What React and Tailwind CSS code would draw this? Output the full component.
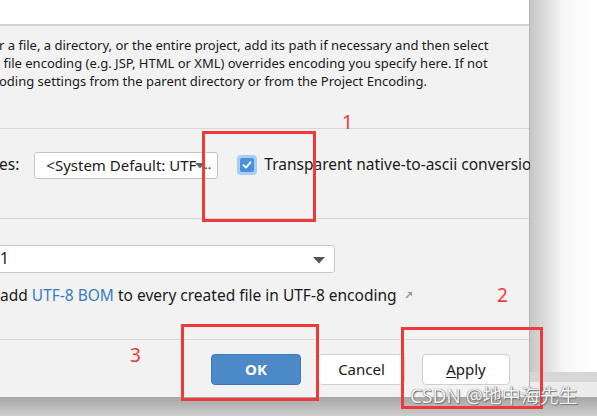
import React from 'react';

const font = { fontFamily: '"Noto Sans", "Open Sans", "Noto Sans CJK SC", sans-serif' };

const RedBox = ({ className }) => (
    <div className={`pointer-events-none absolute border-[3px] border-[#f03a3a] ${className}`} />
);

const App = () => {
    return (
        <div className="relative flex h-[416px] w-[597px] flex-col overflow-hidden bg-white text-[13px] text-[#1a1a1a]" style={font}>
            <div className="flex h-[397px]">
                {/* dialog */}
                <div className="flex w-[530px] flex-col border-r border-[#b4b4b4] bg-[#f2f2f2]">
                    <div className="h-[26px] border-b-2 border-[#d3d3d3] bg-white" />

                    {/* description */}
                    <div className="h-[102px] whitespace-nowrap pt-[10px] leading-[18px]">
                        <p className="-ml-[1px]">r a file, a directory, or the entire project, add its path if necessary and then select</p>
                        <p>&nbsp;file encoding (e.g. JSP, HTML or XML) overrides encoding you specify here. If not</p>
                        <p className="-ml-[1px]">oding settings from the parent directory or from the Project Encoding.</p>
                    </div>

                    {/* properties row */}
                    <div className="flex h-[90px] items-center gap-[15px] whitespace-nowrap border-t border-[#d6d6d6] pb-[17px] text-[15.5px]">
                        <span className="-ml-[1px]">es:</span>
                        <div className="relative flex h-[27px] w-[184px] shrink-0 items-center rounded-[3px] border border-[#c4c4c4] bg-white pl-[11px] text-[15px]">
                            <span>&lt;System Default: UTF</span>
                            <span className="ml-[8px] text-[13px]">..</span>
                            <svg className="absolute left-[160px] top-[10px]" width="10" height="6" viewBox="0 0 10 6">
                                <path d="M0 0 H10 L5 5.5 Z" fill="#666" />
                            </svg>
                        </div>
                        <div className="flex items-center gap-[7px] pl-[4px]">
                            <span className="flex h-[20px] w-[20px] shrink-0 items-center justify-center rounded-[4px] bg-[#a9cdf5]">
                                <span className="flex h-[14px] w-[14px] items-center justify-center rounded-[2px] bg-[#4a90dc]">
                                    <svg width="10" height="10" viewBox="0 0 10 10">
                                        <path d="M1.5 5.2 L4 7.6 L8.6 2.2" fill="none" stroke="#fff" strokeWidth="1.8" strokeLinecap="round" strokeLinejoin="round" />
                                    </svg>
                                </span>
                            </span>
                            <span>Transparent native-to-ascii conversion</span>
                        </div>
                    </div>

                    {/* BOM section */}
                    <div className="h-[121px] border-t border-[#d6d6d6] pt-[26px] text-[15.5px]">
                        <div className="relative -ml-[6px] flex h-[28px] w-[341px] items-center rounded-[3px] border border-[#c8c8c8] bg-white pl-[5px]">
                            <span>1</span>
                            <svg className="absolute right-[9px] top-[11px]" width="12" height="7" viewBox="0 0 12 7">
                                <path d="M0 0 H12 L6 6.5 Z" fill="#555" />
                            </svg>
                        </div>
                        <div className="mt-[12px] flex items-center whitespace-nowrap leading-[20px]">
                            <span>add&nbsp;</span>
                            <span className="text-[#3a7cc3]">UTF-8 BOM</span>
                            <span>&nbsp;to every created file in UTF-8 encoding</span>
                            <svg className="ml-[8px]" width="8" height="8" viewBox="0 0 8 8">
                                <path d="M1 7 L6 2" stroke="#9a9a9a" strokeWidth="1.4" />
                                <path d="M2.5 1 H7 V5.5 Z" fill="#9a9a9a" />
                            </svg>
                        </div>
                    </div>

                    {/* buttons */}
                    <div className="flex flex-1 justify-end gap-[17px] border-t border-[#d6d6d6] pr-[19px] pt-[14px] text-[15px]">
                        <button className="h-[31px] w-[90px] rounded-[4px] border border-[#3f78b8] bg-[#4c89c9] font-bold text-white">OK</button>
                        <button className="h-[31px] w-[87px] rounded-[4px] border border-[#d0d0d0] bg-white">Cancel</button>
                        <button className="h-[31px] w-[88px] rounded-[4px] border border-[#cfcfcf] bg-white">
                            <span className="underline underline-offset-2">A</span>pply
                        </button>
                    </div>
                </div>

                {/* window shadow on the right */}
                <div className="flex flex-1 flex-col bg-linear-to-r from-[#c6c6c6] via-[#f7f7f7] via-50% to-white">
                    <div className="h-[372px]" />
                    <div className="h-[10px] bg-[#d6d6d6]" />
                    <div className="flex-1 bg-[#ececec]" />
                </div>
            </div>
            <div className="flex-1 bg-linear-to-b from-[#a6a6a6] to-[#cdcdcd]" />

            {/* annotations */}
            <RedBox className="left-[202px] top-[131px] h-[91px] w-[114px]" />
            <RedBox className="left-[181px] top-[324px] h-[77px] w-[138px]" />
            <RedBox className="left-[401px] top-[327px] h-[82px] w-[142px]" />
            <span className="absolute left-[342px] top-[110px] text-[19px] leading-[24px] text-[#f03a3a]">1</span>
            <span className="absolute left-[497px] top-[283px] text-[19px] leading-[24px] text-[#f03a3a]">2</span>
            <span className="absolute left-[130px] top-[343px] text-[19px] leading-[24px] text-[#f03a3a]">3</span>
            <span className="absolute left-[410px] top-[384px] whitespace-nowrap text-[19px] leading-[24px] text-[#f2f2f2] [text-shadow:0_0_1px_#555,1px_1px_1px_#777]">CSDN @地中海先生</span>
        </div>
    );
};

export default App;
